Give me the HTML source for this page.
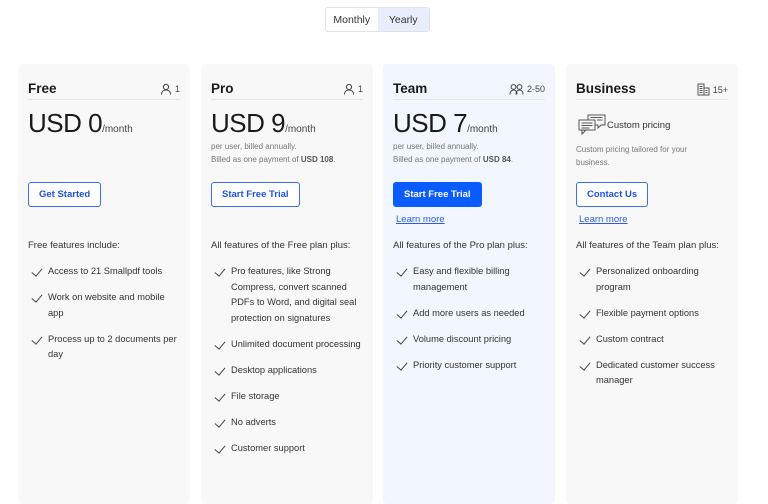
<!DOCTYPE html>
<html><head><meta charset="utf-8"><style>
*{margin:0;padding:0;box-sizing:border-box}
body{width:768px;height:489px;background:#fff;font-family:"Liberation Sans",sans-serif;color:#222;position:relative;overflow:hidden}
.tog{position:absolute;left:325px;top:7px;width:105px;height:25px;border:1px solid #e2e2e2;border-radius:3px;display:flex;font-size:10.5px;overflow:hidden}
.tog div{flex:1;display:flex;align-items:center;justify-content:center;color:#333}
.tog .on{background:#e8eefb}
.card{position:absolute;top:64px;width:172px;height:440px;background:#f8f8f8;border-radius:4px;padding:0 10px}
.card.team{background:#f2f6fe}
.t{position:absolute;left:10px;top:17px;font-weight:bold;font-size:13.5px;color:#1a1a1a}
.u{position:absolute;right:10px;top:19px;font-size:9px;color:#444;display:flex;align-items:center;gap:3px}
.ln{position:absolute;left:10px;right:10px;top:35px;border-top:1px solid #e6e6e6}
.pr{position:absolute;left:10px;top:44px;font-size:26px;color:#1a1a1a;white-space:nowrap;letter-spacing:-0.5px}
.pr small{font-size:10px;color:#444;letter-spacing:0}
.sub{position:absolute;left:10px;top:76px;font-size:8px;line-height:13px;color:#777}
.sub b{color:#555}
.btn{position:absolute;left:10px;top:118px;height:25px;border:1.5px solid #3b6ff0;border-radius:3px;font-size:9.5px;font-weight:bold;color:#1f50e6;display:flex;align-items:center;padding:0 10px;background:#fff}
.btn.f{background:#0a5cff;color:#fff;border-color:#0a5cff}
.lm{position:absolute;left:13px;top:150px;font-size:9.5px;color:#2a5be0;text-decoration:underline}
.fh{position:absolute;left:10px;top:176px;font-size:9.5px;color:#333}
ul{position:absolute;left:10px;top:200px;list-style:none;width:150px}
li{position:relative;padding-left:20px;font-size:9.3px;line-height:15.5px;color:#333;margin-bottom:10.5px}
li:before{content:"";position:absolute;left:6px;top:2px;width:5px;height:9px;border:solid #444;border-width:0 1.3px 1.3px 0;transform:rotate(40deg)}
</style></head><body>
<div class="tog"><div>Monthly</div><div class="on">Yearly</div></div>

<div class="card" style="left:18px">
<div class="t">Free</div>
<div class="u"><svg width="12" height="12" viewBox="0 0 12 12" fill="none" stroke="#444"><circle cx="6" cy="4" r="2.6"/><path d="M1.5 11.5c0-3 2-4.5 4.5-4.5s4.5 1.5 4.5 4.5"/></svg>1</div>
<div class="ln"></div>
<div class="pr">USD 0<small>/month</small></div>
<div class="btn">Get Started</div>
<div class="fh">Free features include:</div>
<ul><li>Access to 21 Smallpdf tools</li><li>Work on website and mobile app</li><li>Process up to 2 documents per day</li></ul>
</div>

<div class="card" style="left:201px">
<div class="t">Pro</div>
<div class="u"><svg width="12" height="12" viewBox="0 0 12 12" fill="none" stroke="#444"><circle cx="6" cy="4" r="2.6"/><path d="M1.5 11.5c0-3 2-4.5 4.5-4.5s4.5 1.5 4.5 4.5"/></svg>1</div>
<div class="ln"></div>
<div class="pr">USD 9<small>/month</small></div>
<div class="sub">per user, billed annually.<br>Billed as one payment of <b>USD 108</b>.</div>
<div class="btn">Start Free Trial</div>
<div class="fh">All features of the Free plan plus:</div>
<ul><li>Pro features, like Strong Compress, convert scanned PDFs to Word, and digital seal protection on signatures</li><li>Unlimited document processing</li><li>Desktop applications</li><li>File storage</li><li>No adverts</li><li>Customer support</li></ul>
</div>

<div class="card team" style="left:383px">
<div class="t">Team</div>
<div class="u"><svg width="15" height="12" viewBox="0 0 15 12" fill="none" stroke="#444"><circle cx="4.5" cy="4" r="2.4"/><circle cx="10.5" cy="4" r="2.4"/><path d="M1 11.5c0-3 1.5-4.5 3.5-4.5S8 8.5 8 11.5M7 11.5c0-3 1.5-4.5 3.5-4.5S14 8.5 14 11.5"/></svg>2-50</div>
<div class="ln"></div>
<div class="pr">USD 7<small>/month</small></div>
<div class="sub">per user, billed annually.<br>Billed as one payment of <b>USD 84</b>.</div>
<div class="btn f">Start Free Trial</div>
<div class="lm">Learn more</div>
<div class="fh">All features of the Pro plan plus:</div>
<ul><li>Easy and flexible billing management</li><li>Add more users as needed</li><li>Volume discount pricing</li><li>Priority customer support</li></ul>
</div>

<div class="card" style="left:566px">
<div class="t">Business</div>
<div class="u"><svg width="13" height="13" viewBox="0 0 13 13" fill="none" stroke="#555"><rect x="1" y="1" width="6" height="11"/><rect x="7" y="5" width="5" height="7"/><path d="M2.5 3.5h3M2.5 5.5h3M2.5 7.5h3M2.5 9.5h3M8.5 7.5h2M8.5 9.5h2"/></svg>15+</div>
<div class="ln"></div>
<svg style="position:absolute;left:12px;top:50px" width="28" height="22" viewBox="0 0 28 22" fill="none" stroke="#555"><rect x="1" y="6" width="16" height="10"/><path d="M4 16v4l4-4M3.5 9h11M3.5 11.5h11M3.5 14h8"/><path d="M10 6V1h17v10h-4l-3 3v-3h-3"/><path d="M12.5 3.5h12M19 6h5.5"/></svg>
<div style="position:absolute;left:41px;top:56px;font-size:9.5px;color:#333">Custom pricing</div>
<div class="sub" style="top:79px;width:140px">Custom pricing tailored for your business.</div>
<div class="btn">Contact Us</div>
<div class="lm">Learn more</div>
<div class="fh">All features of the Team plan plus:</div>
<ul><li>Personalized onboarding program</li><li>Flexible payment options</li><li>Custom contract</li><li>Dedicated customer success manager</li></ul>
</div>
</body></html>
